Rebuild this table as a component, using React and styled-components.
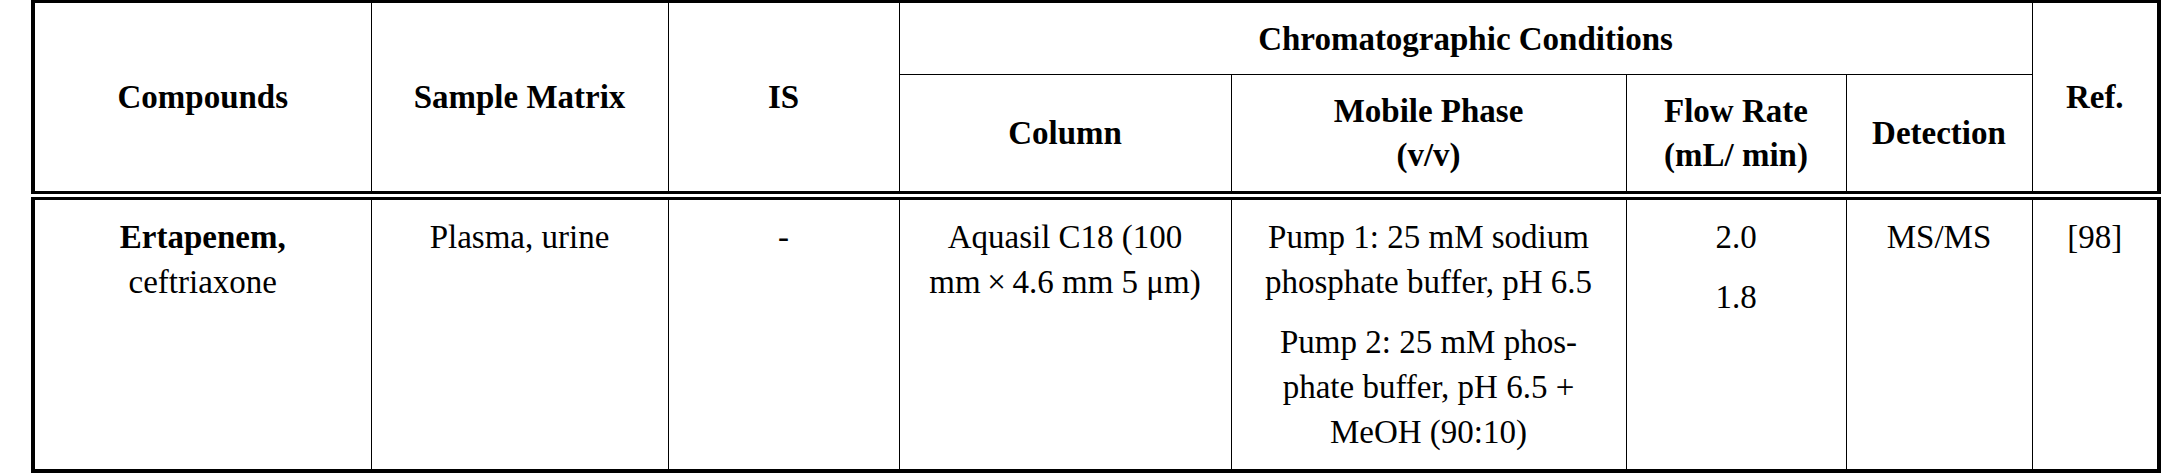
import React from "react";
import styled, { createGlobalStyle } from "styled-components";

const GlobalStyle = createGlobalStyle`
  html, body {
    margin: 0;
    padding: 0;
    background: #fff;
  }
  body {
    font-family: "Liberation Serif", "Times New Roman", serif;
    color: #000;
  }
`;

const Page = styled.div`
  padding-left: 31px;
`;

const Table = styled.table`
  border-collapse: collapse;
  table-layout: fixed;
  width: 2130px;
  border-top: 3px solid #000;
  border-left: 4px solid #000;
  border-right: 4px solid #000;
  border-bottom: 4px solid #000;
  font-size: 33px;
  line-height: 44px;
`;

const Th = styled.th`
  border: 1px solid #000;
  border-bottom: ${(p) => (p.$last ? "9px double #000" : "1px solid #000")};
  font-weight: bold;
  text-align: center;
  vertical-align: middle;
  padding: 0 8px;
  height: ${(p) => p.$h || "auto"};
  white-space: nowrap;
`;

const Td = styled.td`
  border: 1px solid #000;
  text-align: center;
  vertical-align: top;
  padding: 15px 8px 0;
  height: 254px;
  line-height: 45px;
  white-space: nowrap;
`;

const Para = styled.div`
  & + & {
    margin-top: 15px;
  }
`;

const Strong = styled.b`
  font-weight: bold;
`;

const widths = [338, 297, 231, 332, 395, 220, 186, 127];

export default function App() {
  return (
    <Page>
      <GlobalStyle />
      <Table>
        <colgroup>
          {widths.map((w, i) => (
            <col key={i} style={{ width: w }} />
          ))}
        </colgroup>
        <thead>
          <tr>
            <Th rowSpan={2} $last>Compounds</Th>
            <Th rowSpan={2} $last>Sample Matrix</Th>
            <Th rowSpan={2} $last>IS</Th>
            <Th colSpan={4} $h="71px">Chromatographic Conditions</Th>
            <Th rowSpan={2} $last>Ref.</Th>
          </tr>
          <tr>
            <Th $last $h="116px">Column</Th>
            <Th $last>
              Mobile Phase
              <br />
              (v/v)
            </Th>
            <Th $last>
              Flow Rate
              <br />
              (mL/ min)
            </Th>
            <Th $last>Detection</Th>
          </tr>
        </thead>
        <tbody>
          <tr>
            <Td>
              <Strong>Ertapenem,</Strong>
              <br />
              ceftriaxone
            </Td>
            <Td>Plasma, urine</Td>
            <Td>-</Td>
            <Td>
              Aquasil C18 (100
              <br />
              mm{"\u2009"}×{"\u2009"}4.6 mm 5 μm)
            </Td>
            <Td>
              <Para>
                Pump 1: 25 mM sodium
                <br />
                phosphate buffer, pH 6.5
              </Para>
              <Para>
                Pump 2: 25 mM phos-
                <br />
                phate buffer, pH 6.5 +
                <br />
                MeOH (90:10)
              </Para>
            </Td>
            <Td>
              <Para>2.0</Para>
              <Para>1.8</Para>
            </Td>
            <Td>MS/MS</Td>
            <Td>[98]</Td>
          </tr>
        </tbody>
      </Table>
    </Page>
  );
}
